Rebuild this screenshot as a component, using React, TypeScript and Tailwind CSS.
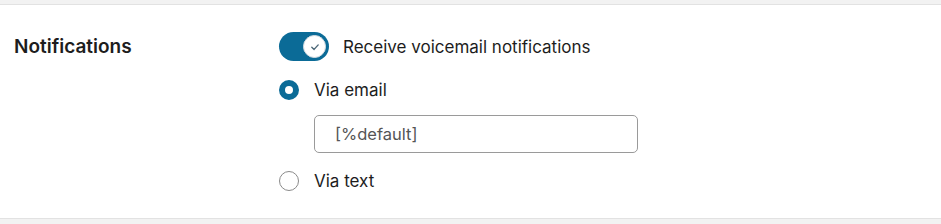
import React, { useState } from 'react';

const App = () => {
  const [enabled, setEnabled] = useState(true);
  const [via, setVia] = useState<'email' | 'text'>('email');
  const [email, setEmail] = useState('[%default]');

  return (
    <div className="w-[941px] h-[224px] bg-[#f2f2f2] pt-[4px] pb-[5px] font-['Inter','Liberation_Sans',sans-serif] text-[#1d1d1d]">
      <div className="h-full bg-white border-y border-[#e2e2e2] flex">
        {/* label column */}
        <div className="w-[279px] pl-[14px] pt-[29px]">
          <h3 className="text-[19px] font-semibold leading-[26px]">Notifications</h3>
        </div>

        {/* settings column */}
        <div className="pt-[27px] flex flex-col">
          <label className="flex items-center gap-[14px] cursor-pointer">
            <button
              type="button"
              onClick={() => setEnabled(!enabled)}
              className={`relative w-[50px] h-[29px] rounded-full transition-colors ${enabled ? 'bg-[#0b6b97]' : 'bg-[#c6c6c6]'}`}
            >
              <span
                className={`absolute top-[3px] w-[23px] h-[23px] rounded-full bg-white border border-[#d6dde2] flex items-center justify-center transition-all ${enabled ? 'left-[24px]' : 'left-[3px]'}`}
              >
                {enabled && (
                  <svg width="12" height="12" viewBox="0 0 12 12" fill="none">
                    <path d="M2.8 6.2 L5.1 8.4 L9.2 3.9" stroke="#4d6878" strokeWidth="1.4" strokeLinecap="round" strokeLinejoin="round" />
                  </svg>
                )}
              </span>
            </button>
            <span className="text-[17px] leading-[24px]">Receive voicemail notifications</span>
          </label>

          <div className="mt-[17px] flex flex-col">
            <label className="flex items-center gap-[15px] cursor-pointer" onClick={() => setVia('email')}>
              <span
                className={`w-[20px] h-[20px] rounded-full box-border ${via === 'email' ? 'border-[6px] border-[#0b6b97] bg-white' : 'border-[1.5px] border-[#8a8a8a] bg-white'}`}
              />
              <span className="text-[17px] leading-[24px]">Via email</span>
            </label>

            <div className="mt-[13px] ml-[35px]">
              <input
                value={email}
                onChange={(e) => setEmail(e.target.value)}
                className="w-[324px] h-[38px] rounded-[5px] border border-[#9a9a9a] px-[20px] text-[16.5px] text-[#555] outline-none"
              />
            </div>

            <label className="mt-[16px] flex items-center gap-[15px] cursor-pointer" onClick={() => setVia('text')}>
              <span
                className={`w-[20px] h-[20px] rounded-full box-border ${via === 'text' ? 'border-[6px] border-[#0b6b97] bg-white' : 'border-[1.5px] border-[#8a8a8a] bg-white'}`}
              />
              <span className="text-[17px] leading-[24px]">Via text</span>
            </label>
          </div>
        </div>
      </div>
    </div>
  );
};

export default App;
